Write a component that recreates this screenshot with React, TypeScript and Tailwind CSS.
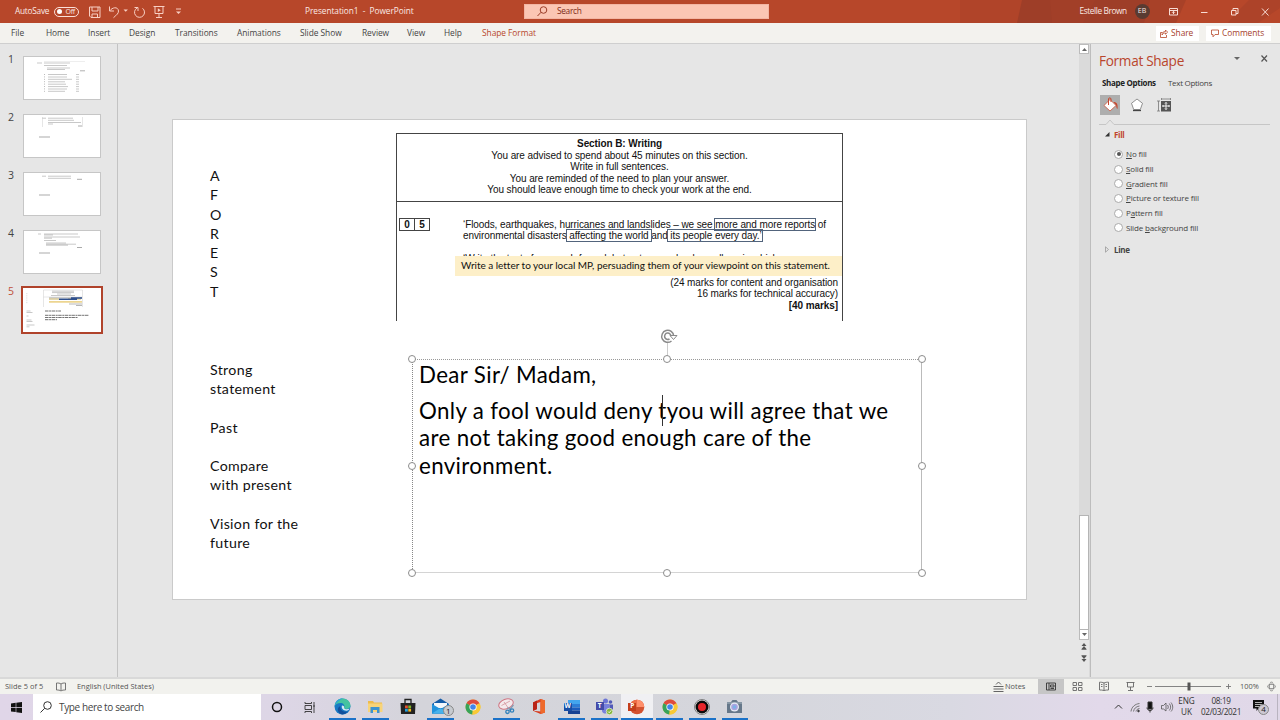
import type { ReactNode } from "react";
import clsx from "clsx";

const TABS = [
  { label: "File", box: "w-[35px]" },
  { label: "Home", box: "w-[42px]" },
  { label: "Insert", box: "w-[41px]" },
  { label: "Design", box: "w-[46px]" },
  { label: "Transitions", box: "w-[62px]" },
  { label: "Animations", box: "w-[63px]" },
  { label: "Slide Show", box: "w-[62px]" },
  { label: "Review", box: "w-[45px]" },
  { label: "View", box: "w-[37px]" },
  { label: "Help", box: "w-[38px]" },
];

const FILLS: [string, string, string][] = [
  ["", "N", "o fill"],
  ["", "S", "olid fill"],
  ["", "G", "radient fill"],
  ["", "P", "icture or texture fill"],
  ["P", "a", "ttern fill"],
  ["Slide ", "b", "ackground fill"],
];

function TitleBar() {
  return (
    <header className="relative flex h-[23px] shrink-0 items-center overflow-hidden bg-[#b7472a] text-[8.3px] text-[#fbe9e4]">
      <svg className="absolute top-0 right-0" width="320" height="23">
        <path d="M0 0h70l-8 23H0z" fill="#b04429" />
        <path d="M62 0h158l-12 23H57z" fill="#9e3e28" />
        <path d="M90 0h45l-12 23H92z" fill="#a23f28" />
        <path d="M190 0h36l-10 23h-32z" fill="#a84128" />
        <path d="M275 14l14-14h31v8l-22 15h-30z" fill="#ad4329" />
      </svg>
      <div className="flex w-[305px] shrink-0 items-center pl-[15px]">
        <span className="w-[38.500px] whitespace-nowrap tracking-[-0.250px]">AutoSave</span>
        <span className="flex h-[10px] w-[25px] items-center rounded-full border border-[#fbe0d8] pl-[2px]">
          <span className="size-[5px] shrink-0 rounded-full bg-white" />
          <span className="ml-[4px] text-[7px] leading-none tracking-[-0.300px]">Off</span>
        </span>
        <svg className="ml-[9px]" width="96" height="14" fill="none" stroke="#f8cfc3" strokeWidth="1">
          <path d="M1.5 2h10.5v10.5H3L1.5 11zM4 2v4h6V2M4 12.5V9h5.5v3.5" />
          <path d="M21.5 1.5v4.5h4.5M21.8 5.8C24 2.5 30 1 30.500 6c0 2.500-1.500 3.500-5 6.700" />
          <path d="M35.500 4.500h4.400l-2.200 2.200z" fill="#f8cfc3" stroke="none" />
          <path d="M46.500 2.500h3.500v3.500M54.500 3.300a5 5 0 1 1-5.500-0.300" />
          <path d="M65.500 1.500h11M67 2v6.500h8V2M71 8.500V12M68 12.500h6" />
          <path d="M69.800 3.300l3 1.900-3 1.900z" fill="#f8cfc3" stroke="none" />
          <path d="M88 4h5" />
          <path d="M88 6.500h5l-2.500 2.500z" fill="#f8cfc3" stroke="none" />
        </svg>
      </div>
      <span className="w-[219px] whitespace-pre tracking-[-0.050px]">Presentation1  -  PowerPoint</span>
      <div className="flex h-[15px] w-[245px] items-center border border-[#f3b6a4] bg-[#fbc6b4] pl-[12px] text-[#7e2a18]">
        <svg width="11" height="11" fill="none" stroke="#9b3d28">
          <circle cx="6.500" cy="4" r="3.300" />
          <path d="M4 6.300L0.500 10" />
        </svg>
        <span className="ml-[9px] tracking-[-0.300px]">Search</span>
      </div>
      <div className="relative ml-auto flex items-center">
        <span className="w-[55px] whitespace-nowrap tracking-[-0.400px]">Estelle Brown</span>
        <span className="flex size-[15px] items-center justify-center rounded-full bg-[#593b32] text-[7px]">EB</span>
        <svg className="ml-[18px]" width="112.500" height="14" fill="none" stroke="#f8ddd5">
          <path d="M1.500 3.500h8v6.500h-8zM1.500 5.500h8M5.500 9V6.500M4 7.800l1.500-1.500L7 7.800" />
          <path d="M33 7.500h6.500" />
          <path d="M63.500 5.500h4.500V10h-4.500zM65 5.500V3.500h5V8.500h-2" />
          <path d="M94 3.500l6.500 7M100.500 3.500l-6.500 7" />
        </svg>
      </div>
    </header>
  );
}

function RibbonTabs() {
  return (
    <nav className="flex h-[20px] shrink-0 items-center bg-[#f3f2ee] pl-[11px] text-[8.4px] tracking-[-0.050px] text-[#444]">
      {TABS.map((t) => (
        <span key={t.label} className={clsx("shrink-0 whitespace-nowrap", t.box)}>
          {t.label}
        </span>
      ))}
      <span className="whitespace-nowrap text-[#b7472a]">Shape Format</span>
      <div className="mr-[9px] ml-auto flex gap-[7px] font-medium text-[#a5402a]">
        <span className="flex h-[15px] w-[43px] items-center gap-[3px] bg-white pl-[4px]">
          <svg width="8" height="9" fill="none" stroke="#b7472a" strokeWidth="0.800">
            <path d="M2.500 3.500H0.500v5h6V6M2 6c0-2.500 1.500-3.500 3.500-3.500V1l2.200 2.200-2.200 2V4C4 4 2.800 4.500 2 6z" />
          </svg>
          Share
        </span>
        <span className="flex h-[15px] w-[65px] items-center gap-[3px] bg-white pl-[5px]">
          <svg width="8" height="9" fill="none" stroke="#b7472a" strokeWidth="0.800">
            <path d="M0.500 1h7v4.500H4L2 7.800V5.500H0.500z" />
          </svg>
          Comments
        </span>
      </div>
    </nav>
  );
}

function Lines({ d, color = "#666" }: { d: string; color?: string }) {
  return <path d={d} stroke={color} strokeWidth="0.800" opacity="0.450" />;
}

const THUMBS: ReactNode[] = [
  <>
    <Lines d="M14 7h5M21 7h26M21 9.500h23M24 12h23M24 13.500h18" />
    <path d="M21 5.500h41" stroke="#ddd" strokeWidth="0.500" />
    <Lines d="M57 14.800h5" color="#222" />
    <Lines d="M25 18.500h19M25 21h19M25 23.300h24M25 25.800h17M25 28.200h18M25 30.600h20M25 33h19M25 35.300h17M53 18.500h3M53 21h3M53 23.300h3M53 25.800h3M53 28.200h3M53 30.600h3M53 33h3M53 35.300h3" />
    <path d="M21.500 18v18" stroke="#aaa" strokeWidth="0.800" strokeDasharray="1 1.400" />
  </>,
  <>
    <Lines d="M19 4.200h4M25 4.200h25M25 6.300h26M25 8.500h33M25 10h5" />
    <path d="M19.500 3v10M59.500 3v10" stroke="#ccc" strokeWidth="0.500" />
    <Lines d="M55 12h4M16 23h11" color="#111" />
  </>,
  <>
    <Lines d="M19 4.200h4M25 4.200h23M25 6.300h23" />
    <Lines d="M54 7.300h5M16 23h11" color="#111" />
  </>,
  <>
    <Lines d="M15 4h3M21 4h34M21 5h9M21 7h36M21 8.200h8M21 10.500h12M23 13h20M23 14.200h30M23 15.200h22" />
    <Lines d="M54 17.500h5M16 23h11" color="#111" />
  </>,
  <>
    <path d="M20.500 2h39v7h-39zM20.500 9v10M59.500 9v10" fill="none" stroke="#ccc" strokeWidth="0.500" />
    <Lines d="M29 3.200h22M29 4.600h22M34 6h14M28 7.500h24" />
    <Lines d="M26 9.800h33" color="#555" />
    <path d="M26 11h10M45 11h13" stroke="#c4ad60" strokeWidth="1.200" />
    <path d="M36 11.200h18M48 10h11" stroke="#2d4e8c" strokeWidth="1.500" />
    <path d="M26 13.800h33" stroke="#ecd590" strokeWidth="1.700" />
    <Lines d="M46 16h13M53 17.500h6" color="#333" />
    <path
      d="M22 23h16M22 27.300h44M22 29.500h33M22 31.700h12"
      stroke="#444"
      strokeWidth="1"
      strokeDasharray="3.500 0.600 2 0.500"
      opacity="0.750"
    />
    <Lines d="M3.500 23h4M3.500 24.500h6M3.500 28h2M3.500 32h5M3.500 33.500h6M3.500 37h8M3.500 38.800h3" />
    <path d="M3.800 5v11" stroke="#bbb" strokeWidth="0.500" strokeDasharray="1 0.800" />
  </>,
];

function ThumbnailPane() {
  return (
    <aside className="flex w-[118px] shrink-0 flex-col gap-[14px] border-r border-[#c3c3c3] pt-[12px] pl-[7px]">
      {THUMBS.map((art, i) => {
        const active = i === THUMBS.length - 1;
        return (
          <div key={i} className="flex h-[44px]">
            <span
              className={clsx(
                "-mt-[5px] w-[16px] pl-px text-[10.500px] leading-[16px]",
                active ? "text-[#c0513a]" : "text-[#444]"
              )}
            >
              {i + 1}
            </span>
            <span
              className={clsx(
                "block h-[44px] w-[78px] bg-white outline",
                active ? "outline-2 outline-[#b0432b]" : "outline-1 -outline-offset-1 outline-[#c6c6c6]"
              )}
            >
              <svg width="78" height="44" fill="none">
                {art}
              </svg>
            </span>
          </div>
        );
      })}
    </aside>
  );
}

function ExamQuestion() {
  return (
    <section className="absolute top-[13px] left-[223px] h-[188px] w-[447px] border border-b-0 border-[#444] font-['Liberation_Sans',Arial,sans-serif] text-[10px] leading-[11.600px] tracking-[-0.090px] whitespace-nowrap text-[#111]">
      <div className="h-[68px] border-b border-[#444] pt-[4px] text-center">
        <p className="font-bold">Section B: Writing</p>
        <p>You are advised to spend about 45 minutes on this section.</p>
        <p>Write in full sentences.</p>
        <p>You are reminded of the need to plan your answer.</p>
        <p>You should leave enough time to check your work at the end.</p>
      </div>
      <div className="flex h-[54px] pt-[16px]">
        <div className="ml-[2px] flex h-[13px] w-[31px] border border-[#444] text-center font-bold leading-[12px]">
          <span className="flex-1 border-r border-[#444]">0</span>
          <span className="flex-1">5</span>
        </div>
        <div className="ml-[33px] pt-[0.500px]">
          <p>
            ‘Floods, earthquakes, hurricanes and landslides – we see{" "}
            <span className="outline outline-[#52647c]">more and more reports</span> of
          </p>
          <p>
            environmental disasters<span className="outline outline-[#52647c]"> affecting the world </span>and
            <span className="outline outline-[#52647c]"> its people every day.’</span>
          </p>
          <p className="mt-[11px] h-[3.300px] overflow-hidden">
            ‘Write the text of a speech for a debate at your school or college in which you argue
          </p>
        </div>
      </div>
      <p className="relative ml-[58px] h-[20px] w-[387px] bg-[#fdefc8] pl-[6px] font-['Lato',sans-serif] text-[10px] leading-[19px] tracking-[-0.020px]">
        Write a letter to your local MP, persuading them of your viewpoint on this statement.
      </p>
      <div className="pt-[0.500px] pr-[4px] text-right">
        <p>(24 marks for content and organisation</p>
        <p>16 marks for technical accuracy)</p>
        <p className="font-bold">[40 marks]</p>
      </div>
    </section>
  );
}

const HANDLES = [
  "top-0 left-0",
  "top-0 left-1/2",
  "top-0 left-full",
  "top-1/2 left-0",
  "top-1/2 left-full",
  "top-full left-0",
  "top-full left-1/2",
  "top-full left-full",
];

function AnswerBox() {
  return (
    <div className="absolute top-[239px] left-[239px] h-[214px] w-[510px]">
      <div className="absolute inset-0 border border-t-[#999] border-r-[#bbb] border-b-[#d4d4d4] border-l-[#888] [border-style:dotted_solid_solid_dotted]" />
      <span className="absolute -top-[16px] left-1/2 h-[16px] w-px bg-[#ccc]" />
      <svg className="absolute -top-[31px] left-[248px]" width="18" height="17" fill="none" stroke="#8a8a8a">
        <path d="M13.700 8A6 6 0 1 0 11.500 13" strokeWidth="1.500" />
        <path d="M11 8.500a3.200 3.200 0 1 0-1.500 2.500" strokeWidth="1.500" />
        <path d="M10 7.500h7l-3.500 4z" fill="white" />
      </svg>
      <div className="relative pt-[2px] pl-[7px] text-[22.300px] leading-[27.200px] tracking-[0.360px] whitespace-nowrap text-black">
        <p>Dear Sir/ Madam,</p>
        <p className="mt-[9px]">
          Only a fool would deny t
          <span className="relative">
            <span className="absolute -top-[2px] -left-[5px] h-[31px] w-px bg-[#333]" />
          </span>
          you will agree that we
        </p>
        <p>are not taking good enough care of the</p>
        <p>environment.</p>
      </div>
      {HANDLES.map((pos) => (
        <span
          key={pos}
          className={clsx(
            "absolute size-[8px] -translate-x-1/2 -translate-y-1/2 rounded-full border-[1.500px] border-[#8c8c8c] bg-white",
            pos
          )}
        />
      ))}
    </div>
  );
}

function Slide() {
  return (
    <div className="relative mt-[75px] ml-[54px] h-[481px] w-[855px] border border-[#cacaca] bg-white font-['Lato',Carlito,sans-serif] text-[14.200px] leading-[19.250px] text-[#111]">
      <div className="absolute top-[46px] left-[37px]">
        {"AFOREST".split("").map((c) => (
          <p key={c}>{c}</p>
        ))}
      </div>
      <div className="absolute top-[240px] left-[37px] flex flex-col gap-[19.200px] tracking-[0.320px] whitespace-nowrap">
        <p>Strong<br />statement</p>
        <p>Past</p>
        <p>Compare<br />with present</p>
        <p>Vision for the<br />future</p>
      </div>
      <ExamQuestion />
      <AnswerBox />
    </div>
  );
}

function ScrollBar() {
  return (
    <div className="flex w-[12px] shrink-0 flex-col border-r border-[#bdbdbd] bg-[#dadada] pr-px">
      <span className="flex h-[10px] items-center justify-center border border-[#bbb] bg-white">
        <svg width="5" height="3"><path d="M0 3h5L2.500 0z" fill="#666" /></svg>
      </span>
      <span className="flex-1" />
      <span className="h-[115px] border border-[#b5b5b5] bg-white" />
      <span className="flex h-[10px] items-center justify-center border border-t-0 border-[#bbb] bg-white">
        <svg width="5" height="3"><path d="M0 0h5L2.500 3z" fill="#666" /></svg>
      </span>
      <span className="flex h-[37px] justify-center bg-[#e6e6e6]">
        <svg width="6" height="26" fill="#555">
          <path d="M0.500 6L3 3l2.500 3zM0.500 9L3 6l2.500 3zM0.500 9h5v0.800h-5z" />
          <path d="M0.500 15h5v0.800h-5zM0.500 16l2.500 3 2.500-3zM0.500 19l2.500 3 2.500-3z" />
        </svg>
      </span>
    </div>
  );
}

function FormatPane() {
  return (
    <aside className="flex w-[189px] shrink-0 flex-col pr-[10px] pl-[8px] text-[8px] tracking-[-0.150px] text-[#444]">
      <div className="flex h-[32px] items-center pt-[2px]">
        <h2 className="text-[13.600px] tracking-[-0.300px] whitespace-nowrap text-[#b9452c]">Format Shape</h2>
        <svg className="mr-px mb-[5px] ml-auto" width="35" height="9">
          <path d="M0 3h6L3 6z" fill="#666" />
          <path d="M27.500 1.500l5.500 6M33 1.500l-5.500 6" stroke="#555" strokeWidth="1.200" />
        </svg>
      </div>
      <div className="flex h-[14px] items-center pl-[3px] whitespace-nowrap">
        <span className="w-[66px] font-bold tracking-[-0.320px] text-[#222]">Shape Options</span>
        <span className="tracking-[-0.300px]">Text Options</span>
      </div>
      <div className="mt-[5px] flex h-[20px] gap-[7px] pl-px">
        <span className="flex size-[20px] items-center justify-center bg-[#aeaeae]">
          <svg width="18" height="18" fill="none">
            <path d="M3 9.500l6-6 6 6-6 5.500z" fill="white" stroke="#c8452b" strokeWidth="0.700" />
            <path d="M7.500 9V3c0-1.500 2.500-1.500 2.500 0v3" stroke="#c8452b" />
            <path d="M12.500 6c3.500 0 4.500 2.500 4 7-1.500-.5-1-3.500-1.500-4z" fill="#c8452b" />
          </svg>
        </span>
        <span className="flex size-[20px] items-center justify-center">
          <svg width="14" height="16" fill="none">
            <path d="M7 2l5.500 4.300-2.200 6.200H3.700L1.500 6.300z" fill="white" stroke="#777" strokeWidth="0.800" />
            <path d="M3 13.500h8" stroke="#444" strokeWidth="1.300" />
          </svg>
        </span>
        <span className="flex size-[20px] items-center justify-center">
          <svg width="16" height="16" fill="none">
            <path d="M2.500 4v10M1 4h3M1 14h3M5.500 2h9M5.500 1v2M14.500 1v2" stroke="#777" strokeWidth="0.800" />
            <path d="M5 4h10v10.500H5z" fill="#555" />
            <path d="M10 5.500v7M6.500 9h7M9 6.500l1-1 1 1M9 11.500l1 1 1-1M7.500 8l-1 1 1 1M12.500 8l1 1-1 1" stroke="white" strokeWidth="0.900" />
          </svg>
        </span>
      </div>
      <svg width="171" height="10" fill="none" stroke="#c6c6c6">
        <path d="M0 9.500h7l4-4.500 4 4.500h156" />
      </svg>
      <div className="mt-[2px] flex h-[15px] items-center pl-[6px] font-bold">
        <svg width="5" height="5"><path d="M4.500 0v4.500H0z" fill="#333" /></svg>
        <span className="ml-[4px] tracking-[-0.300px] text-[#c0452c]">Fill</span>
      </div>
      <div className="mt-[5px] flex flex-col pl-[15px]">
        {FILLS.map(([before, key, after], i) => (
          <div key={key} className="flex h-[14.700px] items-center whitespace-pre">
            <span className="flex size-[9px] items-center justify-center rounded-full border border-[#aaa] bg-white">
              {i === 0 && <span className="size-[4px] rounded-full bg-[#555]" />}
            </span>
            <span className="ml-[3px]">
              {before}
              <u>{key}</u>
              {after}
            </span>
          </div>
        ))}
      </div>
      <div className="mt-[7px] flex h-[15px] items-center pl-[6px] font-bold">
        <svg width="5" height="7" fill="none" stroke="#999" strokeWidth="0.800"><path d="M0.500 0.800l3 2.700-3 2.700z" /></svg>
        <span className="ml-[4px] tracking-[-0.300px]">Line</span>
      </div>
    </aside>
  );
}

function StatusBar() {
  return (
    <footer className="flex h-[15px] shrink-0 items-center bg-[#f2f2ee] pl-[5px] text-[7.400px] whitespace-nowrap text-[#555]">
      <span className="w-[51px] tracking-[0.050px]">Slide 5 of 5</span>
      <svg width="10" height="10" fill="none" stroke="#666" strokeWidth="0.900">
        <path d="M5 2v6.500M5 2C4 1 2 1 0.500 1v7C2 8 4 8 5 9c1-1 3-1 4.500-1V1C8 1 6 1 5 2" />
      </svg>
      <span className="ml-[11px]">English (United States)</span>
      <svg className="ml-auto" width="11" height="12" fill="none" stroke="#555" strokeWidth="0.900">
        <path d="M3 3.500L5.500 1 8 3.500M0.500 5.500h10M0.500 8h10M0.500 10.500h10" />
      </svg>
      <span className="ml-px w-[33px]">Notes</span>
      <span className="flex h-[15px] w-[26px] items-center justify-center bg-[#c6c6c6]">
        <svg width="10" height="9" fill="none" stroke="#333" strokeWidth="0.900">
          <path d="M0.500 1h9v7h-9zM3 1v7M4.500 3h3.500v2H4.500zM4.500 6.500H8" />
        </svg>
      </span>
      <svg className="ml-[8px]" width="66" height="11" fill="none" stroke="#666" strokeWidth="0.900">
        <path d="M1 1.500h3.500v3H1zM6.500 1.500H10v3H6.500zM1 6.500h3.500v3H1zM6.500 6.500H10v3H6.500z" />
        <path d="M32 2v7.500M32 2c-1.500-.8-3-.8-4.500-.8V9c1.500 0 3 0 4.500.5C33.500 9 35 9 36.500 9V1.200c-1.500 0-3 0-4.500.8M29 3.500h1.500M29 5.500h1.500M33.500 3.500h1.500M33.500 5.500h1.500" />
        <path d="M54.500 1.500h8M55.500 1.500v4.500h6V1.500M58.500 6v3M56 9.500h5" />
      </svg>
      <svg className="ml-[8px]" width="86" height="11" stroke="#777" strokeWidth="0.900">
        <path d="M1 5.500h5M9 5.500h66M80 5.500h5M82.500 3v5" />
        <path d="M41.500 1.500h3v8h-3z" fill="#555" stroke="none" />
      </svg>
      <span className="ml-[8px] w-[27px]">100%</span>
      <svg className="mr-[4px]" width="9" height="11" fill="none" stroke="#666" strokeWidth="0.900">
        <path d="M2.200 3.200h4.600v4.600H2.200zM3.500 1.800l1-1 1 1M3.500 9.200l1 1 1-1M1 4.500l-.8 1 .8 1M8 4.500l.8 1-.8 1" />
      </svg>
    </footer>
  );
}

function ChromeIcon() {
  return (
    <svg width="16" height="16" viewBox="0 0 16 16">
      <circle cx="8" cy="8" r="7.500" fill="#f8c936" />
      <path d="M8 8L1.500 4.250A7.500 7.500 0 0 1 14.500 4.300z" fill="#dd4b3e" />
      <path d="M8 8L1.500 4.250A7.500 7.500 0 0 0 7.200 15.450L11 9.700z" fill="#37a35a" />
      <path d="M8 8l6.500-3.700A7.500 7.500 0 0 1 7.200 15.450z" fill="#f8c936" />
      <circle cx="8" cy="8" r="3.600" fill="white" />
      <circle cx="8" cy="8" r="2.800" fill="#4285e8" />
    </svg>
  );
}

// Letter badge that sits on the left half of the Office icons
function Badge({ letter, className }: { letter: string; className: string }) {
  return (
    <span
      className={clsx(
        "absolute top-[4px] left-0 flex size-[8px] items-center justify-center text-[6.500px] leading-none font-bold text-white",
        className
      )}
    >
      {letter}
    </span>
  );
}

const APPS: { name: string; open?: boolean; active?: boolean; icon: ReactNode }[] = [
  {
    name: "cortana",
    icon: <svg width="12" height="12"><circle cx="6" cy="6" r="4.500" fill="none" stroke="#111" strokeWidth="1.500" /></svg>,
  },
  {
    name: "taskview",
    icon: (
      <svg width="12" height="12" fill="none" stroke="#333" strokeWidth="0.900">
        <path d="M1 1v1.500h6.500V1M1 4.500h6.500v4H1zM1 12v-1.500h6.500V12M10 1v11M9 5h2" />
      </svg>
    ),
  },
  {
    name: "edge",
    open: true,
    icon: (
      <svg width="17" height="17" viewBox="0 0 17 17">
        <circle cx="8.500" cy="8.500" r="8" fill="#1878c4" />
        <path d="M0.600 8C1.500 3 5 .5 8.500 .5c4.500 0 8 3.500 8 7 0 3-4.500 4.500-6.500 2.500 1.500-3-1-5-3.500-5S1.500 6 .6 8z" fill="#45c3a0" />
        <path d="M0.600 8C1.500 3 5 .5 8.500 .5 6 2 2.500 4 .6 8z" fill="#2aa5dc" />
        <path d="M6.500 8c-1 3 1.500 6.500 7.500 5.500-2 2-4 3-6 3C3 15 2.500 9.500 6.500 8z" fill="#124f9c" />
        <path d="M8 7.500c2 0 2.500 1 2 2.500 1 1.700 4 1.500 5.500.5-.5 1.500-1.500 2-3 2.200C9 12.500 7 10 8 7.500z" fill="#d9eaf2" />
      </svg>
    ),
  },
  {
    name: "explorer",
    open: true,
    icon: (
      <svg width="16" height="15">
        <path d="M1 2h5l1 1.500h8V12H1z" fill="#eebb4c" />
        <path d="M1 4.500h14.500V13H1z" fill="#f8d479" />
        <path d="M3.500 14V8h9v6h-2.500v-3H6v3z" fill="#3d93d0" />
      </svg>
    ),
  },
  {
    name: "store",
    icon: (
      <svg width="16" height="17">
        <path d="M5 6V1.500h6V6" fill="none" stroke="#222" strokeWidth="1.300" />
        <path d="M.5 5h15l-.5 11H1z" fill="#222" />
        <path d="M5 7.500h2.800v2.800H5z" fill="#e8502d" />
        <path d="M8.300 7.500h2.800v2.800H8.300z" fill="#7cb52b" />
        <path d="M5 10.800h2.800v2.800H5z" fill="#23a1df" />
        <path d="M8.300 10.800h2.800v2.800H8.300z" fill="#f4b81f" />
      </svg>
    ),
  },
  {
    name: "mail",
    open: true,
    icon: (
      <span className="relative">
        <svg width="18" height="17">
          <path d="M0 6l8.500-5.500L17 6v9.500H0z" fill="#135ca8" />
          <path d="M2 5h13v5H2z" fill="#f3f8fc" />
          <path d="M0 6l8.500 5L17 6v9.500H0z" fill="#2293dc" />
          <path d="M0 15.500L8.500 10l8.500 5.500z" fill="#46b2ec" />
        </svg>
        <span className="absolute top-[7px] left-[11px] flex size-[11px] items-center justify-center rounded-full border border-[#888] bg-[#c7cbd0] text-[8px] leading-none text-[#222]">
          1
        </span>
      </span>
    ),
  },
  { name: "chrome", icon: <ChromeIcon /> },
  {
    name: "snip",
    open: true,
    icon: (
      <svg width="17" height="17" fill="none">
        <ellipse cx="8" cy="6" rx="7.500" ry="4.800" fill="#f4e9ec" stroke="#cf7683" transform="rotate(-20 8 6)" />
        <path d="M3.500 7.500L12 3M6 4l5 7" stroke="#d4939c" strokeWidth="0.800" />
        <path d="M15.500 7l-5 6M9.500 9.500l4 2.500" stroke="#829cb4" strokeWidth="1.200" />
        <circle cx="9.500" cy="13.800" r="1.700" stroke="#3282bc" strokeWidth="1.300" />
        <circle cx="14" cy="12.500" r="1.700" stroke="#3282bc" strokeWidth="1.300" />
      </svg>
    ),
  },
  {
    name: "office",
    icon: (
      <svg width="14" height="17">
        <path d="M1 4.500L8.500 1l4.500 1.500v12L8.500 16 1 12.700l7.500.8V4L4 5.500v6l-3 1.200z" fill="#d83b1e" />
        <path d="M8.500 1L13 2.500v12L8.500 16z" fill="#ee6a2c" />
        <path d="M1 4.500L5 2.500v8.700l-4 1.500z" fill="#b92417" />
      </svg>
    ),
  },
  {
    name: "word",
    open: true,
    icon: (
      <span className="relative">
        <svg width="16" height="16">
          <path d="M4 1h12v4H4z" fill="#43a5ee" />
          <path d="M4 5h12v3.500H4z" fill="#2d7dd6" />
          <path d="M4 8.500h12v3H4z" fill="#1b5cbe" />
          <path d="M4 11.500h12v3.500H4z" fill="#164192" />
        </svg>
        <Badge letter="W" className="bg-[#174ea6]" />
      </span>
    ),
  },
  {
    name: "teams",
    open: true,
    icon: (
      <span className="relative">
        <svg width="17" height="17">
          <circle cx="9.500" cy="3" r="2.500" fill="#6d75d5" />
          <circle cx="14.500" cy="4" r="1.800" fill="#5159b8" />
          <path d="M6 6h7.500v6c0 4-6.500 5-7.500 1z" fill="#7880dc" />
          <path d="M13.500 6.500H17V11c0 2-2 3-3.500 2z" fill="#5159b8" />
          <circle cx="13.500" cy="13.500" r="3.300" fill="#86b83d" stroke="#eee" strokeWidth="0.700" />
          <path d="M12 13.500l1.200 1.200 2-2.300" fill="none" stroke="white" strokeWidth="0.900" />
        </svg>
        <Badge letter="T" className="bg-[#444ba8]" />
      </span>
    ),
  },
  {
    name: "powerpoint",
    open: true,
    active: true,
    icon: (
      <span className="relative">
        <svg width="17" height="16">
          <circle cx="9" cy="8" r="7.300" fill="#d35230" />
          <path d="M9 .7a7.300 7.300 0 0 1 7.300 7.300H9z" fill="#ff8f6b" />
          <path d="M9 8H1.700A7.300 7.300 0 0 1 9 .7z" fill="#ed6c47" />
        </svg>
        <Badge letter="P" className="bg-[#c43e1c]" />
      </span>
    ),
  },
  { name: "chrome-2", open: true, icon: <ChromeIcon /> },
  {
    name: "recorder",
    open: true,
    icon: (
      <svg width="16" height="16">
        <circle cx="8" cy="8" r="7.500" fill="#eee" stroke="#555" strokeWidth="0.700" />
        <circle cx="8" cy="8" r="6.500" fill="#0b0b0b" />
        <circle cx="8" cy="8" r="4" fill="#e8262b" />
      </svg>
    ),
  },
  {
    name: "camera",
    open: true,
    icon: (
      <svg width="17" height="15">
        <path d="M1 3h4l1.500-2h4L12 3h4v11H1z" fill="#66788a" />
        <path d="M1 3h15v2H1z" fill="#8797a5" />
        <circle cx="8.500" cy="8" r="4.500" fill="#e8ecf5" />
        <circle cx="8.500" cy="8" r="3.300" fill="#aaa3df" />
        <circle cx="8.500" cy="8" r="1.800" fill="#7bb2e8" />
      </svg>
    ),
  },
];

function Taskbar() {
  return (
    <div className="flex h-[26px] shrink-0 items-stretch bg-[linear-gradient(90deg,#e0d6e8_0px,#ddd6e6_280px,#d4d4da_420px,#d5d6dc_740px,#d9d9e2_950px,#e2d9ea_1100px,#e0d8e8_1280px)] text-[8.200px] text-[#333]">
      <span className="flex w-[33px] items-center justify-center">
        <svg width="11" height="11" fill="#111">
          <path d="M0 1.500L4.700 .8v4.300H0zM5.300 .7L11 0v5.100H5.300zM0 5.700h4.700V10L0 9.400zM5.300 5.700H11V11l-5.700-.8z" />
        </svg>
      </span>
      <div className="flex w-[228px] items-center bg-white pl-[7px] text-[10px] text-[#444]">
        <svg width="12" height="12" fill="none" stroke="#333">
          <circle cx="7.500" cy="4.500" r="3.800" />
          <path d="M4.700 7.300L.5 11.500" />
        </svg>
        <span className="ml-[7px] tracking-[-0.380px] whitespace-nowrap">Type here to search</span>
      </div>
      {APPS.map((app) => (
        <span
          key={app.name}
          className={clsx(
            "relative flex w-[32.700px] shrink-0 items-center justify-center pb-px",
            app.active && "bg-[#f0f0f3]"
          )}
        >
          {app.icon}
          {app.open && (
            <span
              className={clsx(
                "absolute bottom-0 h-[2px] bg-[#1b72c8]",
                app.active ? "inset-x-0" : "inset-x-[3px]"
              )}
            />
          )}
        </span>
      ))}
      <div className="ml-auto flex items-center">
        <svg width="60" height="16" fill="none" stroke="#333" strokeWidth="1">
          <path d="M1 9.500l3.500-3.500L8 9.500" />
          <path d="M17 12.500C17.500 8 21 5 25.500 4.500M19.500 12.500c.5-3 2.500-5 6-5.500M22 12.500c.3-1.500 1.500-2.800 3.500-3" stroke="#777" />
          <circle cx="24.500" cy="12" r="0.800" fill="#333" />
          <path d="M34 3h4v7h-4z" fill="#111" />
          <path d="M33 8.500c0 4 6 4 6 0M36 11.500V13.500" />
          <path d="M47.500 6.500h2l2.500-2.500v8L49.500 10h-2zM53.500 6c1 1.300 1 3 0 4M55.300 4.500c1.800 2.300 1.800 5 0 7M57 3.500c2.300 3 2.300 6.500 0 9" stroke="#555" strokeWidth="0.800" />
        </svg>
        <div className="w-[25px] pb-[2px] text-center leading-[11.500px]">
          <p>ENG</p>
          <p>UK</p>
        </div>
        <div className="w-[44px] pb-[2px] text-center leading-[11.500px] tracking-[-0.350px] whitespace-nowrap">
          <p>08:19</p>
          <p>02/03/2021</p>
        </div>
        <span className="relative ml-[10px] h-[17px] w-[24px]">
          <svg width="12" height="13">
            <path d="M0 1h11v8.500H5.500L3.500 12V9.500H0z" fill="#111" />
            <path d="M2 3.500h7M2 5.500h7M2 7.500h5" stroke="#ddd" strokeWidth="0.800" />
          </svg>
          <span className="absolute top-[5px] left-[5px] flex size-[11px] items-center justify-center rounded-full border border-[#888] bg-[#ccc8d2] text-[8px] leading-none text-[#222]">
            4
          </span>
        </span>
        <span className="mr-[2px] h-[26px] w-px bg-[#b9b4c0]" />
      </div>
    </div>
  );
}

export default function App() {
  return (
    <div className="flex h-[720px] w-[1280px] flex-col overflow-hidden bg-[#e6e6e6] font-['Open_Sans','Noto_Sans',sans-serif]">
      <TitleBar />
      <RibbonTabs />
      <main className="flex min-h-0 flex-1 border-t border-b-2 border-t-[#cfcfcf] border-b-[#d9d9d9]">
        <ThumbnailPane />
        <div className="min-w-0 flex-1">
          <Slide />
        </div>
        <ScrollBar />
        <FormatPane />
      </main>
      <StatusBar />
      <Taskbar />
    </div>
  );
}
